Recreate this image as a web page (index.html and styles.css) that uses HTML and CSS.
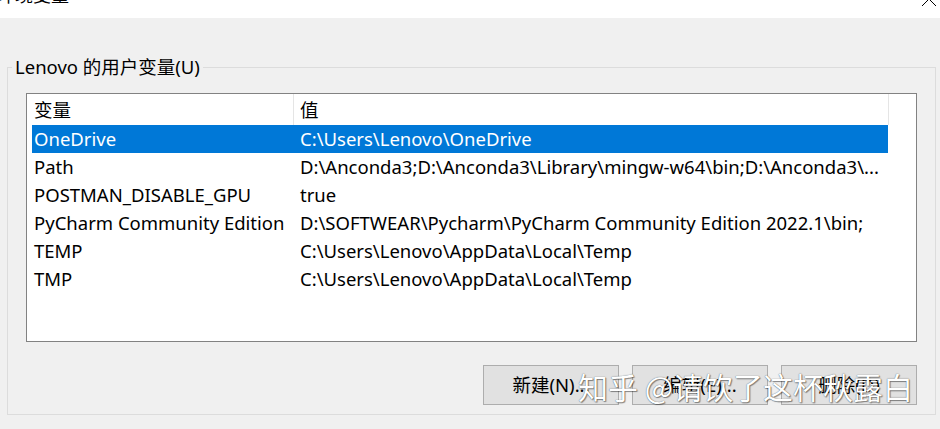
FILE: index.html
```html
<!DOCTYPE html>
<html lang="zh-CN">
<head>
  <meta charset="UTF-8" />
  <title>环境变量</title>
  <link rel="stylesheet" href="styles.css">
</head>
<body>

  <!-- Title bar (cut off at the top) -->
  <div class="titlebar">
    <span class="title">环境变量</span>
    <svg class="close" width="16" height="16" viewBox="0 0 16 16">
      <path d="M1 1 L15 15 M15 1 L1 15" stroke="#000" stroke-width="1" fill="none" />
    </svg>
  </div>

  <div class="dialog">
    <fieldset class="group">
      <legend>Lenovo 的用户变量(U)</legend>

      <!-- List of variables -->
      <div class="listbox">
        <div class="list-header">
          <div class="col-head name-head">变量</div>
          <div class="col-head value-head">值</div>
        </div>
        <div class="row selected">
          <div class="cell name">OneDrive</div>
          <div class="cell">C:\Users\Lenovo\OneDrive</div>
        </div>
        <div class="row">
          <div class="cell name">Path</div>
          <div class="cell">D:\Anconda3;D:\Anconda3\Library\mingw-w64\bin;D:\Anconda3\...</div>
        </div>
        <div class="row">
          <div class="cell name">POSTMAN_DISABLE_GPU</div>
          <div class="cell">true</div>
        </div>
        <div class="row">
          <div class="cell name">PyCharm Community Edition</div>
          <div class="cell">D:\SOFTWEAR\Pycharm\PyCharm Community Edition 2022.1\bin;</div>
        </div>
        <div class="row">
          <div class="cell name">TEMP</div>
          <div class="cell">C:\Users\Lenovo\AppData\Local\Temp</div>
        </div>
        <div class="row">
          <div class="cell name">TMP</div>
          <div class="cell">C:\Users\Lenovo\AppData\Local\Temp</div>
        </div>
      </div>

      <div class="buttons">
        <div class="btn">新建(N)...</div>
        <div class="btn">编辑(E)...</div>
        <div class="btn">删除(D)</div>
      </div>
    </fieldset>
  </div>

  <!-- Watermark over the buttons -->
  <div class="watermark">知乎 @请饮了这杯秋露白</div>

</body>
</html>
```

FILE: styles.css
```css
body {
  font-family: "Noto Sans", "Noto Sans CJK SC", sans-serif;
  font-size: 18.5px;
  color: #000;
  background-color: #f0f0f0;
  margin: 0;
  padding: 0;
  width: 940px;
  height: 429px;
  overflow: hidden;
  position: relative;
}

/* Title bar */
.titlebar {
  height: 18px;
  background-color: #fff;
  display: flex;
  justify-content: space-between;
  align-items: flex-start;
  overflow: hidden;
}

.title {
  font-size: 18px;
  line-height: 24px;
  margin-top: -17px;
  margin-left: -3px;
}

.close {
  margin-top: -9px;
  margin-right: 3px;
}

.dialog {
  padding: 37px 4px 0 7px;
}

/* Group box */
.group {
  margin: 0;
  padding: 0 18px 0 18px;
  border: 1px solid #dcdcdc;
  height: 360px;
  box-sizing: border-box;
}

.group legend {
  padding: 0 3px;
  margin-left: -14px;
  line-height: 24px;
}

.listbox {
  margin-top: 14px;
  height: 249px;
  box-sizing: border-box;
  border: 1px solid #828282;
  background-color: #fff;
}

.list-header {
  display: grid;
  grid-template-columns: 267px 595px;
  height: 31px;
}

.col-head {
  padding-left: 7px;
  line-height: 31px;
  border-right: 1px solid #e5e5e5;
}

.value-head {
  padding-left: 6px;
}

.row {
  display: grid;
  grid-template-columns: 268px 1fr;
  width: 856px;
  margin-left: 5px;
  height: 28px;
  line-height: 28px;
  white-space: nowrap;
}

.row.selected {
  background-color: #0078d7;
  color: #fff;
}

.cell.name {
  padding-left: 2px;
}

/* Buttons */
.buttons {
  display: flex;
  justify-content: flex-end;
  gap: 13px;
  margin-top: 23px;
}

.btn {
  width: 134px;
  height: 38px;
  line-height: 38px;
  text-align: center;
  background-color: #e1e1e1;
  border: 1px solid #adadad;
}

.watermark {
  position: absolute;
  left: 578px;
  top: 366px;
  font-family: "Noto Sans CJK SC", sans-serif;
  font-size: 30px;
  line-height: 40px;
  color: #fff;
  white-space: nowrap;
  text-shadow: 0 0 1px rgba(0, 0, 0, 0.7), 1px 1px 1px rgba(0, 0, 0, 0.4);
}
```
